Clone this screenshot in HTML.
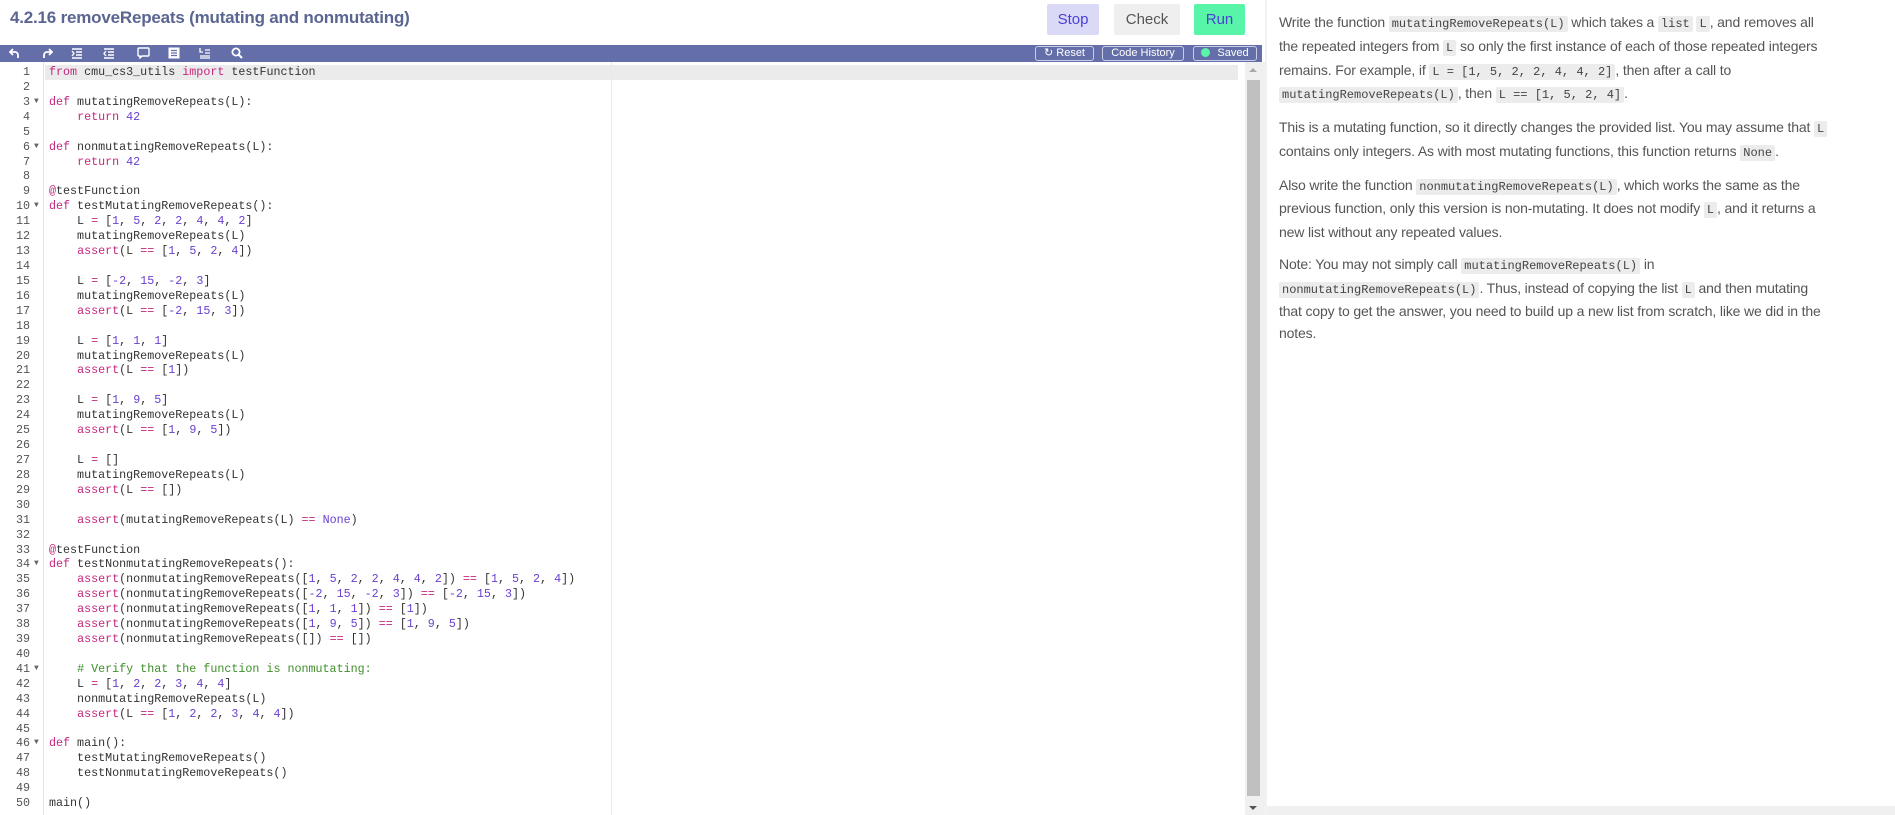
<!DOCTYPE html>
<html><head><meta charset="utf-8"><style>
*{margin:0;padding:0;box-sizing:border-box}
html,body{width:1895px;height:815px;overflow:hidden}
body{background:#fff;font-family:"Liberation Sans",sans-serif;position:relative}
.title{position:absolute;left:10px;top:8px;font-size:17px;color:#5b6591;font-weight:bold;letter-spacing:-0.2px}
.btn{position:absolute;top:4px;height:31px;border-radius:2px;font-size:15px;text-align:center;line-height:31px}
.tb{position:absolute;left:0;top:45px;width:1262px;height:17px;background:#646ea8}
.tb svg{position:absolute;top:2px}
.pill{position:absolute;top:1px;height:15px;border:1px solid #c9cde6;border-radius:3px;color:#fff;font-size:11px;line-height:13px;text-align:center}
.ed{position:absolute;left:0;top:62px;width:1245px;height:753px;background:#fff;overflow:hidden}
.gut{position:absolute;left:0;top:0;width:44px;height:753px;border-right:1px solid #e3e3e3}
.hl{position:absolute;left:45px;top:3px;width:1193px;height:15px;background:#ebebeb}
.pm{position:absolute;left:611px;top:0;width:1px;height:753px;background:#e8e8e8}
.code{position:absolute;left:0;top:3px;width:1240px;font-family:"Liberation Mono",monospace;font-size:11.7px;line-height:14.93px;color:#333}
.ln{display:block;height:14.93px;position:relative}
.ln b{font-weight:normal;position:absolute;left:0;width:30px;text-align:right;color:#555}
.ln i{font-style:normal;position:absolute;left:34px;font-size:8px;color:#666}
.ln u{text-decoration:none;position:absolute;left:49px;white-space:pre}
.k{color:#c3287e}.n{color:#6a3fd2}.c{color:#3e8f2a}
.sb{position:absolute;left:1245px;top:62px;width:20px;height:753px;background:#f0f0f0}
.right{position:absolute;left:1279px;top:12px;font-size:14px;color:#555;line-height:21.75px;white-space:nowrap;letter-spacing:-0.15px}
.right p{margin-bottom:10px}
code{font-family:"Liberation Mono",monospace;font-size:12px;background:#ececec;color:#444;padding:1px 3px;border-radius:2px;letter-spacing:0}
.hs{position:absolute;left:1267px;top:806px;width:628px;height:9px;background:#f0f0f0}
</style></head><body>
<div class="title">4.2.16 removeRepeats (mutating and nonmutating)</div>
<div class="btn" style="left:1047px;width:52px;background:#dadaf7;color:#4b40d6">Stop</div>
<div class="btn" style="left:1114px;width:66px;background:#efefef;color:#555">Check</div>
<div class="btn" style="left:1194px;width:51px;background:#58f5a8;color:#4b40d6">Run</div>
<div style="position:absolute;left:1265px;top:0;width:2px;height:815px;background:#f2f2f2"></div>
<div class="tb">
<svg style="left:9px" width="12" height="12" viewBox="0 0 12 12"><path d="M4 2L1 5 4 8M1 5h5a3 3 0 013 3v3" stroke="#fff" stroke-width="1.8" fill="none"/></svg>
<svg style="left:41px" width="12" height="12" viewBox="0 0 12 12"><path d="M8 2l3 3-3 3M11 5H6a3 3 0 00-3 3v3" stroke="#fff" stroke-width="1.8" fill="none"/></svg>
<svg style="left:71px" width="12" height="12" viewBox="0 0 12 12"><path d="M1 2h10M5 5h6M5 8h6M1 11h10M1 4l2 2.5-2 2.5" stroke="#fff" stroke-width="1.4" fill="none"/></svg>
<svg style="left:103px" width="12" height="12" viewBox="0 0 12 12"><path d="M1 2h10M5 5h6M5 8h6M1 11h10M3 4L1 6.5 3 9" stroke="#fff" stroke-width="1.4" fill="none"/></svg>
<svg style="left:137px" width="13" height="12" viewBox="0 0 13 12"><path d="M2 1h9a1 1 0 011 1v6a1 1 0 01-1 1H5l-2 2V9H2a1 1 0 01-1-1V2a1 1 0 011-1z" stroke="#fff" stroke-width="1.4" fill="none"/></svg>
<svg style="left:168px" width="12" height="12" viewBox="0 0 12 12"><rect x="0.5" y="0.5" width="11" height="11" fill="#fff"/><path d="M3 3.5h6M3 6h6M3 8.5h6" stroke="#646ea8" stroke-width="1.2"/></svg>
<svg style="left:199px" width="12" height="12" viewBox="0 0 12 12"><path d="M1 1v4h3M6 3h5M6 6h5M1 9h10M1 11h10" stroke="#fff" stroke-width="1.3" fill="none"/></svg>
<svg style="left:231px" width="12" height="12" viewBox="0 0 12 12"><circle cx="5" cy="5" r="3.6" stroke="#fff" stroke-width="1.8" fill="none"/><path d="M7.5 7.5L11 11" stroke="#fff" stroke-width="2"/></svg>
<div class="pill" style="left:1035px;width:59px">&#x21BB; Reset</div>
<div class="pill" style="left:1102px;width:82px">Code History</div>
<div class="pill" style="left:1193px;width:64px"><span style="display:inline-block;width:9px;height:9px;border-radius:50%;background:#58f5a8;vertical-align:-1px;margin-right:7px"></span>Saved</div>
</div>
<div class="ed">
<div class="gut"></div>
<div class="hl"></div>
<div class="pm"></div>
<div class="code"><span class="ln"><b>1</b><u><span class="k">from</span> cmu_cs3_utils <span class="k">import</span> testFunction</u></span><span class="ln"><b>2</b></span><span class="ln"><b>3</b><i>▼</i><u><span class="k">def</span> mutatingRemoveRepeats(L):</u></span><span class="ln"><b>4</b><u>    <span class="k">return</span> <span class="n">42</span></u></span><span class="ln"><b>5</b></span><span class="ln"><b>6</b><i>▼</i><u><span class="k">def</span> nonmutatingRemoveRepeats(L):</u></span><span class="ln"><b>7</b><u>    <span class="k">return</span> <span class="n">42</span></u></span><span class="ln"><b>8</b></span><span class="ln"><b>9</b><u><span class="k">@</span>testFunction</u></span><span class="ln"><b>10</b><i>▼</i><u><span class="k">def</span> testMutatingRemoveRepeats():</u></span><span class="ln"><b>11</b><u>    L <span class="k">=</span> [<span class="n">1</span>, <span class="n">5</span>, <span class="n">2</span>, <span class="n">2</span>, <span class="n">4</span>, <span class="n">4</span>, <span class="n">2</span>]</u></span><span class="ln"><b>12</b><u>    mutatingRemoveRepeats(L)</u></span><span class="ln"><b>13</b><u>    <span class="k">assert</span>(L <span class="k">==</span> [<span class="n">1</span>, <span class="n">5</span>, <span class="n">2</span>, <span class="n">4</span>])</u></span><span class="ln"><b>14</b></span><span class="ln"><b>15</b><u>    L <span class="k">=</span> [<span class="n">-2</span>, <span class="n">15</span>, <span class="n">-2</span>, <span class="n">3</span>]</u></span><span class="ln"><b>16</b><u>    mutatingRemoveRepeats(L)</u></span><span class="ln"><b>17</b><u>    <span class="k">assert</span>(L <span class="k">==</span> [<span class="n">-2</span>, <span class="n">15</span>, <span class="n">3</span>])</u></span><span class="ln"><b>18</b></span><span class="ln"><b>19</b><u>    L <span class="k">=</span> [<span class="n">1</span>, <span class="n">1</span>, <span class="n">1</span>]</u></span><span class="ln"><b>20</b><u>    mutatingRemoveRepeats(L)</u></span><span class="ln"><b>21</b><u>    <span class="k">assert</span>(L <span class="k">==</span> [<span class="n">1</span>])</u></span><span class="ln"><b>22</b></span><span class="ln"><b>23</b><u>    L <span class="k">=</span> [<span class="n">1</span>, <span class="n">9</span>, <span class="n">5</span>]</u></span><span class="ln"><b>24</b><u>    mutatingRemoveRepeats(L)</u></span><span class="ln"><b>25</b><u>    <span class="k">assert</span>(L <span class="k">==</span> [<span class="n">1</span>, <span class="n">9</span>, <span class="n">5</span>])</u></span><span class="ln"><b>26</b></span><span class="ln"><b>27</b><u>    L <span class="k">=</span> []</u></span><span class="ln"><b>28</b><u>    mutatingRemoveRepeats(L)</u></span><span class="ln"><b>29</b><u>    <span class="k">assert</span>(L <span class="k">==</span> [])</u></span><span class="ln"><b>30</b></span><span class="ln"><b>31</b><u>    <span class="k">assert</span>(mutatingRemoveRepeats(L) <span class="k">==</span> <span class="n">None</span>)</u></span><span class="ln"><b>32</b></span><span class="ln"><b>33</b><u><span class="k">@</span>testFunction</u></span><span class="ln"><b>34</b><i>▼</i><u><span class="k">def</span> testNonmutatingRemoveRepeats():</u></span><span class="ln"><b>35</b><u>    <span class="k">assert</span>(nonmutatingRemoveRepeats([<span class="n">1</span>, <span class="n">5</span>, <span class="n">2</span>, <span class="n">2</span>, <span class="n">4</span>, <span class="n">4</span>, <span class="n">2</span>]) <span class="k">==</span> [<span class="n">1</span>, <span class="n">5</span>, <span class="n">2</span>, <span class="n">4</span>])</u></span><span class="ln"><b>36</b><u>    <span class="k">assert</span>(nonmutatingRemoveRepeats([<span class="n">-2</span>, <span class="n">15</span>, <span class="n">-2</span>, <span class="n">3</span>]) <span class="k">==</span> [<span class="n">-2</span>, <span class="n">15</span>, <span class="n">3</span>])</u></span><span class="ln"><b>37</b><u>    <span class="k">assert</span>(nonmutatingRemoveRepeats([<span class="n">1</span>, <span class="n">1</span>, <span class="n">1</span>]) <span class="k">==</span> [<span class="n">1</span>])</u></span><span class="ln"><b>38</b><u>    <span class="k">assert</span>(nonmutatingRemoveRepeats([<span class="n">1</span>, <span class="n">9</span>, <span class="n">5</span>]) <span class="k">==</span> [<span class="n">1</span>, <span class="n">9</span>, <span class="n">5</span>])</u></span><span class="ln"><b>39</b><u>    <span class="k">assert</span>(nonmutatingRemoveRepeats([]) <span class="k">==</span> [])</u></span><span class="ln"><b>40</b></span><span class="ln"><b>41</b><i>▼</i><u>    <span class="c"># Verify that the function is nonmutating:</span></u></span><span class="ln"><b>42</b><u>    L <span class="k">=</span> [<span class="n">1</span>, <span class="n">2</span>, <span class="n">2</span>, <span class="n">3</span>, <span class="n">4</span>, <span class="n">4</span>]</u></span><span class="ln"><b>43</b><u>    nonmutatingRemoveRepeats(L)</u></span><span class="ln"><b>44</b><u>    <span class="k">assert</span>(L <span class="k">==</span> [<span class="n">1</span>, <span class="n">2</span>, <span class="n">2</span>, <span class="n">3</span>, <span class="n">4</span>, <span class="n">4</span>])</u></span><span class="ln"><b>45</b></span><span class="ln"><b>46</b><i>▼</i><u><span class="k">def</span> main():</u></span><span class="ln"><b>47</b><u>    testMutatingRemoveRepeats()</u></span><span class="ln"><b>48</b><u>    testNonmutatingRemoveRepeats()</u></span><span class="ln"><b>49</b></span><span class="ln"><b>50</b><u>main()</u></span></div>
</div>
<div class="sb">
<div style="position:absolute;left:4px;top:6px;width:0;height:0;border-left:4px solid transparent;border-right:4px solid transparent;border-bottom:4px solid #aaa"></div>
<div style="position:absolute;left:2px;top:18px;width:13px;height:716px;background:#c0c0c0"></div>
<div style="position:absolute;left:4px;top:744px;width:0;height:0;border-left:4px solid transparent;border-right:4px solid transparent;border-top:4px solid #555"></div>
</div>
<div class="right">
<p>Write the function <code>mutatingRemoveRepeats(L)</code> which takes a <code>list</code> <code>L</code>, and removes all<br>the repeated integers from <code>L</code> so only the first instance of each of those repeated integers<br>remains. For example, if <code>L = [1, 5, 2, 2, 4, 4, 2]</code>, then after a call to<br><code>mutatingRemoveRepeats(L)</code>, then <code>L == [1, 5, 2, 4]</code>.</p>
<p>This is a mutating function, so it directly changes the provided list. You may assume that <code>L</code><br>contains only integers. As with most mutating functions, this function returns <code>None</code>.</p>
<p>Also write the function <code>nonmutatingRemoveRepeats(L)</code>, which works the same as the<br>previous function, only this version is non-mutating. It does not modify <code>L</code>, and it returns a<br>new list without any repeated values.</p>
<p>Note: You may not simply call <code>mutatingRemoveRepeats(L)</code> in<br><code>nonmutatingRemoveRepeats(L)</code>. Thus, instead of copying the list <code>L</code> and then mutating<br>that copy to get the answer, you need to build up a new list from scratch, like we did in the<br>notes.</p>
</div>
<div class="hs"></div>
</body></html>
